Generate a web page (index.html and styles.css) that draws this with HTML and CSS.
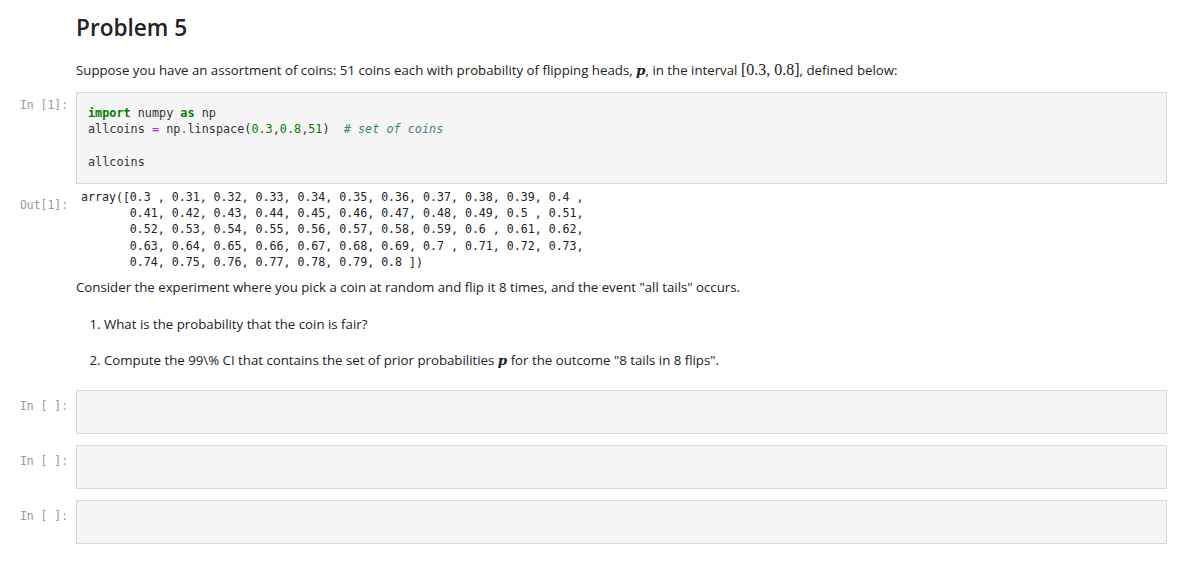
FILE: index.html
```html
<!DOCTYPE html>
<html>
<head>
<meta charset="utf-8">
<link rel="stylesheet" href="styles.css">
</head>
<body>
<div class="notebook">
  <div class="cell md-cell">
    <div class="prompt"></div>
    <div class="md">
      <h2 class="title">Problem 5</h2>
      <p class="intro">Suppose you have an assortment of coins: 51 coins each with probability of flipping heads, <span class="mvar">p</span>, in the interval <span class="math">[0.3, 0.8]</span>, defined below:</p>
    </div>
  </div>

  <div class="cell code-cell first">
    <div class="prompt in-prompt">In&nbsp;[1]:</div>
    <div class="input-box">
      <div class="code">
        <div class="line"><span class="kw">import</span> <span>numpy</span> <span class="kw">as</span> <span>np</span></div>
        <div class="line"><span>allcoins</span> <span class="op">=</span> <span>np</span><span class="op">.</span><span>linspace(</span><span class="num">0.3</span><span>,</span><span class="num">0.8</span><span>,</span><span class="num">51</span><span>)</span>  <span class="cm"># set of coins</span></div>
        <div class="line">&nbsp;</div>
        <div class="line"><span>allcoins</span></div>
      </div>
    </div>
  </div>

  <div class="cell out-cell">
    <div class="prompt out-prompt">Out[1]:</div>
    <div class="output">
      <div class="line">array([0.3 , 0.31, 0.32, 0.33, 0.34, 0.35, 0.36, 0.37, 0.38, 0.39, 0.4 ,</div>
      <div class="line">       0.41, 0.42, 0.43, 0.44, 0.45, 0.46, 0.47, 0.48, 0.49, 0.5 , 0.51,</div>
      <div class="line">       0.52, 0.53, 0.54, 0.55, 0.56, 0.57, 0.58, 0.59, 0.6 , 0.61, 0.62,</div>
      <div class="line">       0.63, 0.64, 0.65, 0.66, 0.67, 0.68, 0.69, 0.7 , 0.71, 0.72, 0.73,</div>
      <div class="line">       0.74, 0.75, 0.76, 0.77, 0.78, 0.79, 0.8 ])</div>
    </div>
  </div>

  <div class="cell md-cell">
    <div class="prompt"></div>
    <div class="md">
      <p class="consider">Consider the experiment where you pick a coin at random and flip it 8 times, and the event "all tails" occurs.</p>
      <ol class="questions">
        <li>What is the probability that the coin is fair?</li>
        <li>Compute the 99\% CI that contains the set of prior probabilities <span class="mvar">p</span> for the outcome "8 tails in 8 flips".</li>
      </ol>
    </div>
  </div>

  <div class="cell code-cell empty">
    <div class="prompt in-prompt">In&nbsp;[&nbsp;]:</div>
    <div class="input-box blank"></div>
  </div>
  <div class="cell code-cell empty">
    <div class="prompt in-prompt">In&nbsp;[&nbsp;]:</div>
    <div class="input-box blank"></div>
  </div>
  <div class="cell code-cell empty">
    <div class="prompt in-prompt">In&nbsp;[&nbsp;]:</div>
    <div class="input-box blank"></div>
  </div>
</div>
</body>
</html>
```

FILE: styles.css
```css
html, body {
  margin: 0;
  padding: 0;
  background: #ffffff;
}

body {
  font-family: "Open Sans", "Noto Sans", sans-serif;
  font-size: 13.25px;
  color: #000000;
}

.notebook {
  padding-right: 16px;
}

.cell {
  display: flex;
  align-items: flex-start;
}

.prompt {
  flex: 0 0 76px;
  box-sizing: border-box;
  padding-right: 8px;
  text-align: right;
  font-family: "DejaVu Sans Mono", "Liberation Mono", monospace;
  font-size: 11.4px;
  line-height: 16px;
  color: #9a9a9a;
  white-space: nowrap;
}

.md {
  flex: 1 1 auto;
  min-width: 0;
}

.title {
  margin: 14px 0 0 0;
  font-size: 22.6px;
  line-height: 28px;
  font-weight: 600;
  color: #222222;
}

.intro {
  margin: 18px 0 0 0;
  line-height: 20px;
  color: #222222;
}

.mvar {
  font-family: "DejaVu Serif", "Liberation Serif", serif;
  font-style: italic;
  font-weight: bold;
  font-size: 13.5px;
}

.math {
  font-family: "Liberation Serif", "DejaVu Serif", serif;
  font-size: 16px;
}

.code-cell.first {
  margin-top: 12px;
}

.in-prompt {
  padding-top: 5px;
}

.input-box {
  flex: 1 1 auto;
  min-width: 0;
  box-sizing: border-box;
  background: #f5f5f5;
  border: 1px solid #d9d9d9;
  padding: 12px 12px 12px 11px;
}

.code, .output {
  margin: 0;
  font-family: "DejaVu Sans Mono", "Liberation Mono", monospace;
  font-size: 11.6px;
  line-height: 16.4px;
  color: #333333;
}

.code {
  font-size: 11.8px;
}

.line {
  white-space: pre;
  height: 16.4px;
}

.kw {
  color: #008000;
  font-weight: bold;
}

.op {
  color: #aa22ff;
}

.num {
  color: #008000;
}

.cm {
  color: #408080;
  font-style: italic;
}

.out-prompt {
  padding-top: 13px;
}

.output {
  flex: 1 1 auto;
  padding: 5px 0 0 5px;
  color: #222222;
}

.consider {
  margin: 6px 0 0 0;
  line-height: 20px;
  color: #222222;
}

.questions {
  margin: 17px 0 0 0;
  padding-left: 28px;
  color: #222222;
}

.questions li {
  line-height: 20px;
  margin-bottom: 16px;
}

.questions li:last-child {
  margin-bottom: 0;
}

.code-cell.empty {
  margin-top: 11px;
}

.code-cell.empty:nth-of-type(5) {
  margin-top: 20px;
}

.empty .in-prompt {
  padding-top: 8px;
}

.input-box.blank {
  height: 44px;
  padding: 0;
}
```
